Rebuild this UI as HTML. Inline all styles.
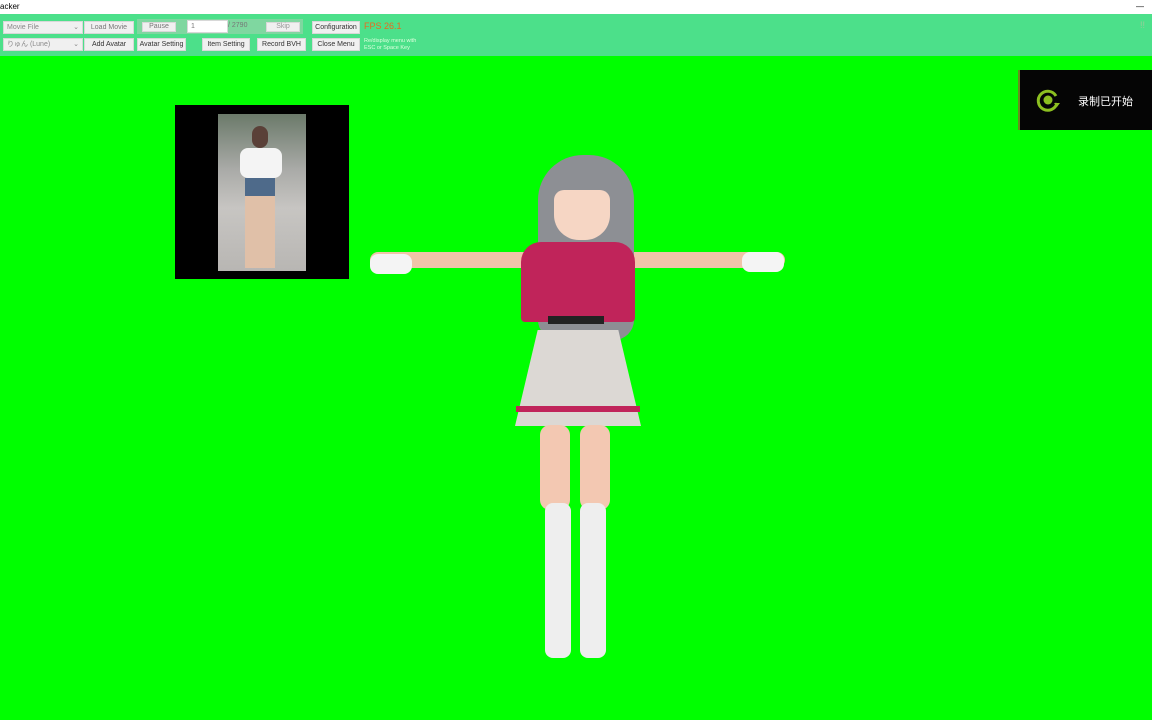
<!DOCTYPE html>
<html><head><style>
body{margin:0;width:1152px;height:720px;overflow:hidden;background:#00ff00;font-family:"Liberation Sans","Noto Sans CJK SC",sans-serif;position:relative}
.a{position:absolute}
.title{left:0;top:0;width:1152px;height:14px;background:#fff;font-size:8px;line-height:14px;color:#000}
.bar{left:0;top:14px;width:1152px;height:42px;background:#4ce08a}
.b{position:absolute;background:#f0f0f0;border:1px solid #d8d8d8;font-size:7px;color:#333;text-align:center;line-height:11px;height:11px;box-sizing:content-box}
</style></head><body>
<div class="a title">acker<span style="position:absolute;right:8px">—</span></div>
<div class="a bar"></div>
<div class="b" style="left:3px;top:21px;width:75px;text-align:left;padding-left:3px;color:#888">Movie File<span style="float:right;margin-right:3px">⌄</span></div>
<div class="b" style="left:84px;top:21px;width:48px;color:#777">Load Movie</div>
<div class="a" style="left:137px;top:19px;width:166px;height:15px;background:#7fd7a0"></div>
<div class="b" style="left:142px;top:22px;width:32px;height:8px;line-height:8px;color:#777">Pause</div>
<div class="b" style="left:187px;top:20px;width:36px;background:#fff;text-align:left;padding-left:3px;color:#777">1</div>
<div class="a" style="left:228px;top:22px;font-size:7px;color:#777">/ 2790</div>
<div class="b" style="left:266px;top:22px;width:32px;height:8px;line-height:8px;color:#999">Skip</div>
<div class="b" style="left:312px;top:21px;width:46px">Configuration</div>
<div class="a" style="left:364px;top:21px;font-size:9px;color:#e86a20">FPS 26.1</div>
<div class="b" style="left:3px;top:38px;width:75px;text-align:left;padding-left:3px;color:#888">りゅん (Lune)<span style="float:right;margin-right:3px">⌄</span></div>
<div class="b" style="left:84px;top:38px;width:48px">Add Avatar</div>
<div class="b" style="left:137px;top:38px;width:47px">Avatar Setting</div>
<div class="b" style="left:202px;top:38px;width:46px">Item Setting</div>
<div class="b" style="left:257px;top:38px;width:47px">Record BVH</div>
<div class="b" style="left:312px;top:38px;width:46px">Close Menu</div>
<div class="a" style="left:364px;top:38px;font-size:5.5px;color:#dfd;line-height:7px">Re/display menu with<br>ESC or Space Key</div>
<div class="a" style="left:1140px;top:20px;font-size:9px;color:#9c9">!!</div>

<div class="a" style="left:1018px;top:70px;width:134px;height:60px;background:#050505;border-left:2px solid #6a8a20"></div>
<svg class="a" style="left:1034px;top:86px" width="30" height="30" viewBox="0 0 30 30"><circle cx="14" cy="14" r="4.5" fill="#8cc020"/><path d="M22 10 A9.5 9.5 0 1 0 23 17" fill="none" stroke="#8cc020" stroke-width="3"/><path d="M20 17 L26 17 L23 21 Z" fill="#8cc020"/></svg>
<div class="a" style="left:1078px;top:93px;font-size:11px;color:#fff">录制已开始</div>

<div class="a" style="left:175px;top:105px;width:174px;height:174px;background:#000"></div>
<div class="a" style="left:218px;top:114px;width:88px;height:157px;background:linear-gradient(#6b7a6a 0%,#a9aaa7 35%,#c7c5c2 60%,#b8b6b3 100%)"></div>
<div class="a" style="left:240px;top:148px;width:42px;height:30px;background:#f4f4f4;border-radius:8px"></div>
<div class="a" style="left:252px;top:126px;width:16px;height:22px;background:#5a4038;border-radius:8px"></div>
<div class="a" style="left:245px;top:178px;width:30px;height:90px;background:linear-gradient(#4e6a8a 0%,#4e6a8a 20%,#e0c0a8 20%)"></div>

<!-- character -->
<div class="a" style="left:370px;top:252px;width:415px;height:16px;background:#f0c4a8;border-radius:8px"></div>
<div class="a" style="left:370px;top:254px;width:42px;height:20px;background:#f4f4f4;border-radius:8px"></div>
<div class="a" style="left:742px;top:252px;width:42px;height:20px;background:#f4f4f4;border-radius:8px"></div>
<div class="a" style="left:538px;top:155px;width:96px;height:185px;background:#8d8f94;border-radius:45px 45px 20px 20px"></div>
<div class="a" style="left:554px;top:190px;width:56px;height:50px;background:#f6d6c4;border-radius:10px 10px 25px 25px"></div>
<div class="a" style="left:521px;top:242px;width:114px;height:80px;background:#c0245a;border-radius:20px 20px 4px 4px"></div>
<div class="a" style="left:548px;top:316px;width:56px;height:8px;background:#222"></div>
<div class="a" style="left:515px;top:330px;width:126px;height:96px;background:#dcd8d4;clip-path:polygon(18% 0,82% 0,100% 100%,0 100%)"></div>
<div class="a" style="left:516px;top:406px;width:124px;height:6px;background:#c0245a"></div>
<div class="a" style="left:540px;top:425px;width:30px;height:85px;background:#f3c8b2;border-radius:10px"></div>
<div class="a" style="left:580px;top:425px;width:30px;height:85px;background:#f3c8b2;border-radius:10px"></div>
<div class="a" style="left:545px;top:503px;width:26px;height:155px;background:#eeeeee;border-radius:8px"></div>
<div class="a" style="left:580px;top:503px;width:26px;height:155px;background:#eeeeee;border-radius:8px"></div>
</body></html>
